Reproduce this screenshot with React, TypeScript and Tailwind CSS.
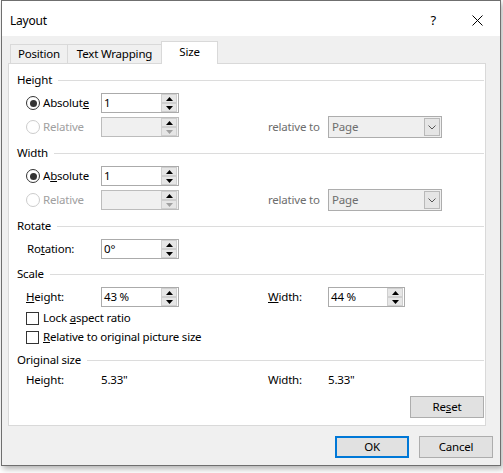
import React from 'react';

const FONT = "font-['Segoe_UI','Noto_Sans',sans-serif]";

function Spinner({ disabled }: { disabled?: boolean }) {
  const btn = 'flex h-[9px] w-[16px] items-center justify-center border border-[#cfcfcf] bg-[#e6e6e6]';
  return (
    <div className="mr-[1px] flex flex-col">
      <div className={btn}>
        <svg width="7" height="4" viewBox="0 0 7 4">
          <path d="M0 4 L3.5 0 L7 4 Z" fill="#000" />
        </svg>
      </div>
      <div className={btn}>
        <svg width="7" height="4" viewBox="0 0 7 4">
          <path d="M0 0 L7 0 L3.5 4 Z" fill={disabled ? '#a0a0a0' : '#000'} />
        </svg>
      </div>
    </div>
  );
}

function SpinBox({ value, disabled, width = 'w-[78px]' }: { value?: string; disabled?: boolean; width?: string }) {
  return (
    <div
      className={`flex h-[20px] ${width} items-center border ${
        disabled ? 'border-[#bcbcbc] bg-[#f0f0f0]' : 'border-[#ababab] bg-white'
      }`}
    >
      <span className="flex-1 pl-[2px] text-black">{value}</span>
      <Spinner disabled={disabled} />
    </div>
  );
}

function Select() {
  return (
    <div className="flex h-[22px] w-[114px] border border-[#adadad] bg-[#efefef]">
      <span className="flex-1 pl-[3px] leading-[20px] text-[#6d6d6d]">Page</span>
      <div className="m-[1px] flex w-[16px] items-center justify-center border border-[#b9b9b9] bg-[#e5e5e5]">
        <svg width="8" height="5" viewBox="0 0 8 5">
          <path d="M0.5 0.5 L4 4 L7.5 0.5" fill="none" stroke="#555" strokeWidth="1" />
        </svg>
      </div>
    </div>
  );
}

function Radio({ checked, disabled }: { checked?: boolean; disabled?: boolean }) {
  return (
    <div
      className={`flex h-[14px] w-[14px] items-center justify-center rounded-full border bg-white ${
        disabled ? 'border-[#cccccc]' : 'border-[#333333]'
      }`}
    >
      {checked && <div className="h-[7px] w-[7px] rounded-full bg-[#333333]" />}
    </div>
  );
}

function Checkbox() {
  return <div className="h-[13px] w-[13px] border border-[#333333] bg-white" />;
}

function SectionHeader({ title, className = '' }: { title: string; className?: string }) {
  return (
    <div className={`flex h-[14px] items-center pl-[8px] ${className}`}>
      <span className="leading-[14px] text-black">{title}</span>
      <div className="ml-[6px] mr-[1px] h-px flex-1 bg-[#dcdcdc]" />
    </div>
  );
}

function RadioPair({ absLabel, className = '' }: { absLabel: React.ReactNode; className?: string }) {
  return (
    <div className={className}>
      <div className="flex h-[20px] items-center pl-[17px]">
        <div className="flex w-[75px] items-center gap-[3px]">
          <Radio checked />
          <span>{absLabel}</span>
        </div>
        <SpinBox value="1" />
      </div>
      <div className="mt-[4px] flex h-[20px] items-center pl-[17px]">
        <div className="flex w-[75px] items-center gap-[3px]">
          <Radio disabled />
          <span className="text-[#a0a0a0]">Relative</span>
        </div>
        <SpinBox disabled />
        <div className="w-[89px]" />
        <span className="w-[60px] text-[#6d6d6d]">relative to</span>
        <Select />
      </div>
    </div>
  );
}

function Button({ children, primary }: { children: React.ReactNode; primary?: boolean }) {
  return (
    <div
      className={`flex h-[22px] w-[74px] items-center justify-center bg-[#e1e1e1] ${
        primary ? 'border-2 border-[#0078d7]' : 'border border-[#adadad]'
      }`}
    >
      {children}
    </div>
  );
}

export default function App() {
  return (
    <div className={`h-[473px] w-[503px] overflow-hidden bg-white text-[11.5px] tracking-[-0.2px] text-black ${FONT}`}>
      <div className="ml-[1px] flex h-[466px] w-[500px] flex-col border border-[#6f6f6f] bg-[#f0f0f0] shadow-[2px_3px_6px_rgba(0,0,0,0.3)]">
        {/* title bar */}
        <div className="flex h-[35px] items-center bg-white pt-[4px]">
          <span className="pl-[8px] text-[12px]">Layout</span>
          <span className="ml-auto text-[13px]">?</span>
          <svg className="ml-[36px] mr-[17px]" width="11" height="11" viewBox="0 0 11 11">
            <path d="M0.5 0.5 L10.5 10.5 M10.5 0.5 L0.5 10.5" stroke="#000" strokeWidth="1" />
          </svg>
        </div>

        {/* tabs */}
        <div className="flex h-[27px] items-end pl-[8px]">
          <div className="flex h-[19px] w-[58px] items-center justify-center border border-b-0 border-[#d9d9d9] bg-[#f0f0f0]">
            Position
          </div>
          <div className="-ml-px flex h-[19px] w-[95px] items-center justify-center border border-b-0 border-[#d9d9d9] bg-[#f0f0f0]">
            Text Wrapping
          </div>
          <div className="relative z-10 -mb-px -ml-px flex h-[23px] w-[57px] items-center justify-center border border-b-0 border-[#d9d9d9] bg-white pb-[2px]">
            Size
          </div>
        </div>

        {/* panel */}
        <div className="ml-[6px] flex h-[363px] w-[478px] flex-col border border-[#d9d9d9] bg-white pt-[9px]">
          <SectionHeader title="Height" />
          <RadioPair
            className="mt-[6px]"
            absLabel={
              <>
                Absolut<u>e</u>
              </>
            }
          />

          <SectionHeader title="Width" className="mt-[9px]" />
          <RadioPair
            className="mt-[6px]"
            absLabel={
              <>
                A<u>b</u>solute
              </>
            }
          />

          <SectionHeader title="Rotate" className="mt-[9px]" />
          <div className="mt-[6px] flex h-[20px] items-center pl-[18px]">
            <span className="w-[74px]">
              Ro<u>t</u>ation:
            </span>
            <SpinBox value="0°" />
          </div>

          <SectionHeader title="Scale" className="mt-[8px]" />
          <div className="mt-[6px] flex h-[20px] items-center pl-[17px]">
            <span className="w-[75px]">
              <u>H</u>eight:
            </span>
            <SpinBox value="43 %" />
            <div className="w-[89px]" />
            <span className="w-[60px]">
              <u>W</u>idth:
            </span>
            <SpinBox value="44 %" width="w-[77px]" />
          </div>
          <div className="mt-[3px] flex h-[16px] items-center gap-[4px] pl-[17px]">
            <Checkbox />
            <span>
              Lock <u>a</u>spect ratio
            </span>
          </div>
          <div className="mt-[3px] flex h-[16px] items-center gap-[4px] pl-[17px]">
            <Checkbox />
            <span>
              <u>R</u>elative to original picture size
            </span>
          </div>

          <SectionHeader title="Original size" className="mt-[8px]" />
          <div className="mt-[5px] flex h-[16px] items-center pl-[17px]">
            <span className="w-[75px]">Height:</span>
            <span className="w-[167px]">5.33"</span>
            <span className="w-[60px]">Width:</span>
            <span>5.33"</span>
          </div>

          <div className="mr-[1px] mt-[8px] flex justify-end">
            <Button>
              Re<u>s</u>et
            </Button>
          </div>
        </div>

        {/* footer buttons */}
        <div className="mt-[10px] flex justify-end gap-[10px] pr-[7px]">
          <Button primary>OK</Button>
          <Button>Cancel</Button>
        </div>
      </div>
    </div>
  );
}
